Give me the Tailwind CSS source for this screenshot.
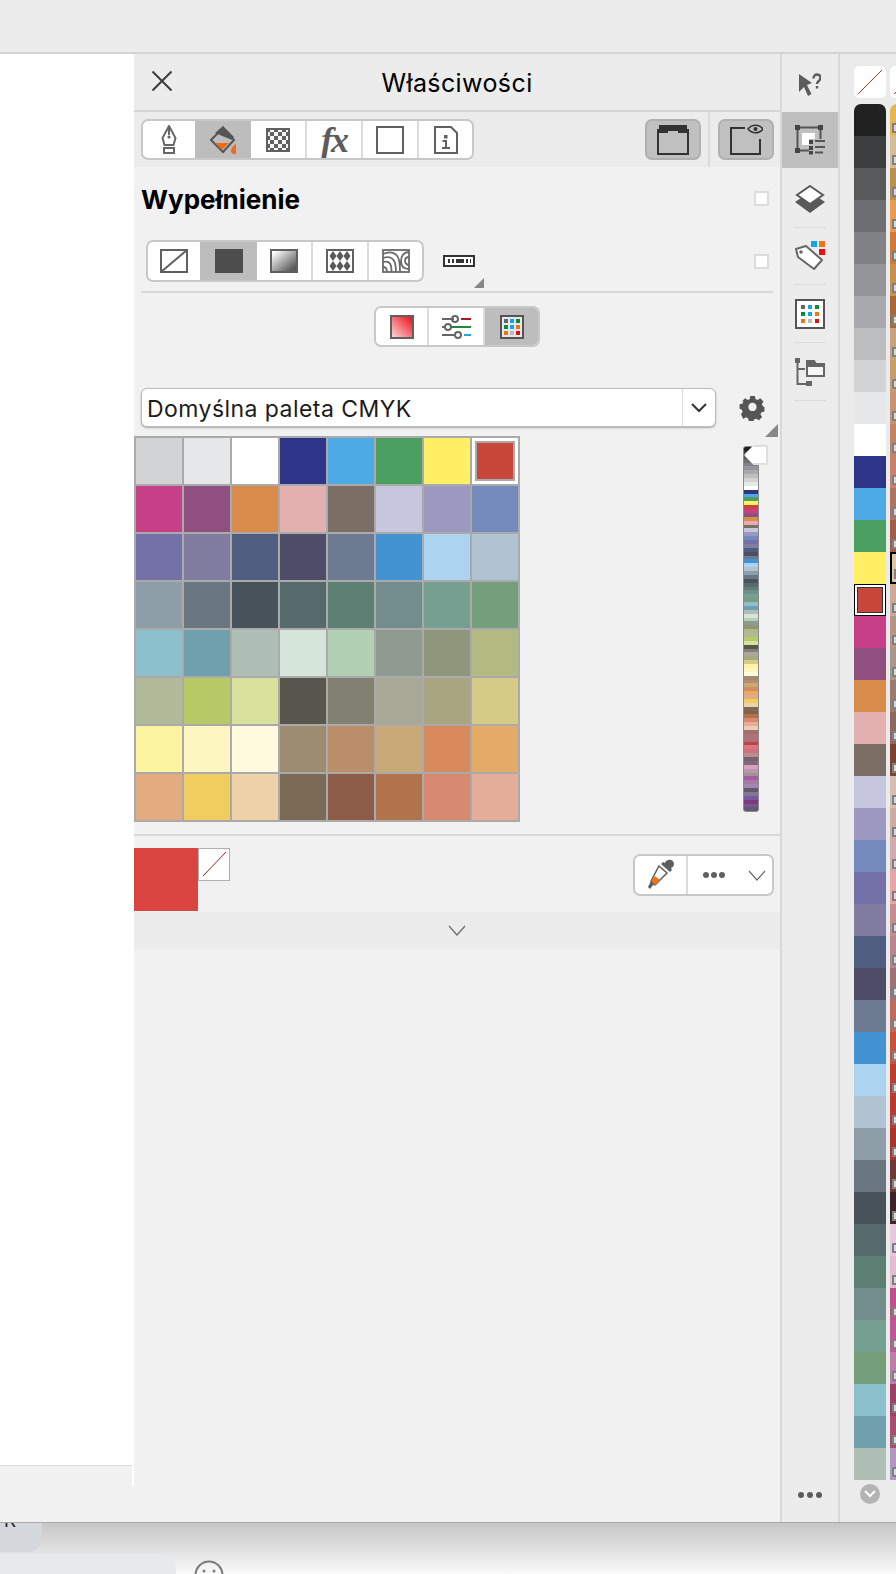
<!DOCTYPE html>
<html lang="pl">

<head>
  <meta charset="UTF-8" />
  <title>Właściwości</title>
  <script src="https://cdn.jsdelivr.net/npm/@tailwindcss/browser@4"></script>
</head>

<body class="w-[896px] h-[1574px] overflow-hidden bg-[#ececec] font-['Inter',sans-serif] text-black">

  <!-- top bar -->
  <div class="h-[54px] border-b-2 border-[#d4d4d4] bg-[#ececec]"></div>

  <div class="flex h-[1468px] border-b border-[#a8a8a8] box-content">

    <!-- document area -->
    <div class="w-[134px] flex flex-col bg-[#f1f1f1]">
      <div class="flex-1 bg-white"></div>
      <div class="h-[1px] w-[132px] bg-[#dcdcdc]"></div>
      <div class="h-[20px] flex">
        <div class="flex-1"></div>
        <div class="w-[2px] bg-white"></div>
      </div>
      <div class="h-[36px]"></div>
    </div>

    <!-- properties panel -->
    <div class="w-[648px] border-r-2 border-[#d8d8d8] bg-[#f1f1f1] flex flex-col">

      <div class="h-[56px] flex items-center relative bg-[#ececec]">
        <svg class="ml-[17px] mb-[3px]" width="22" height="22" viewBox="0 0 22 22" fill="none" stroke="#3c3c3c" stroke-width="2"><path d="M1.500 1.500l19 19M20.500 1.500l-19 19" /></svg>
        <div class="flex-1 text-center text-[25px] leading-none pr-[39px] mt-[3px] tracking-[0.4px]">Właściwości</div>
      </div>
      <div class="h-[2px] bg-[#d6d6d6]"></div>

      <!-- tabs -->
      <div class="h-[55px] flex items-center pl-[7px] bg-[#ececec]">
        <div class="flex h-[41px] w-[333px] border-2 border-[#c8c8c8] rounded-[7px] bg-white overflow-hidden">
          <div class="w-[52px] flex items-center justify-center">
            <svg width="20" height="30" viewBox="0 0 20 30" fill="none" stroke="#666" stroke-width="2"><path d="M10 1l6.500 12-2 7h-9l-2-7z" /><path d="M10 2v8" /><circle cx="10" cy="12" r="1.600" fill="#666" stroke="none" /><path d="M5 23h10v5H5z" /></svg>
          </div>
          <div class="w-[56px] flex items-center justify-center bg-[#bdbdbd]">
            <svg width="26" height="28" viewBox="0 0 26 28"><path d="M13 2L1 14l12 12 11-12z" fill="none" stroke="#555" stroke-width="2" /><path d="M5 7l8-7 11 11-2 3z" fill="#555" /><path d="M5 17h14l-7 7z" fill="#ef6c17" /><path d="M26 18c-3 1-5 5-5 7 0 1 1 3 3 3h2z" fill="#ef6c17" /></svg>
          </div>
          <div class="w-[56px] flex items-center justify-center border-r-2 border-[#dcdcdc]">
            <svg width="24" height="24" viewBox="0 0 24 24"><defs><pattern id="chk" width="8" height="8" patternUnits="userSpaceOnUse"><rect width="8" height="8" fill="#f4f4f4" /><rect width="4" height="4" fill="#606060" /><rect x="4" y="4" width="4" height="4" fill="#606060" /></pattern></defs><rect width="24" height="24" fill="url(#chk)" /><rect x="1" y="1" width="22" height="22" fill="none" stroke="#606060" stroke-width="2" /></svg>
          </div>
          <div class="w-[56px] flex items-center justify-center border-r-2 border-[#dcdcdc] font-['Liberation_Serif',serif] italic font-bold text-[36px] leading-none tracking-[-2px] text-[#5c5c5c]">fx</div>
          <div class="w-[56px] flex items-center justify-center border-r-2 border-[#dcdcdc]">
            <div class="w-[28px] h-[28px] border-2 border-[#606060]"></div>
          </div>
          <div class="flex-1 flex items-center justify-center">
            <svg width="24" height="28" viewBox="0 0 24 28" fill="none" stroke="#606060" stroke-width="2"><path d="M1 1h16l6 6v20H1z" /><rect x="10" y="9" width="3.500" height="3.500" fill="#606060" stroke="none" /><path d="M8.500 15h3.500v7M8 22h8" /></svg>
          </div>
        </div>
        <div class="ml-auto w-[56px] h-[41px] rounded-[7px] border-2 border-[#b0b0b0] bg-[#c0c0c0] flex items-center justify-center">
          <svg width="32" height="30" viewBox="0 0 32 30" fill="none"><path d="M1 5h30v24H1z" stroke="#333" stroke-width="2" /><path d="M2 0h28v8h-9V4H11v4H2z" fill="#333" /></svg>
        </div>
        <div class="w-[2px] h-[55px] ml-[7px] mr-[8px] bg-[#dcdcdc]"></div>
        <div class="w-[56px] h-[41px] mr-[6px] rounded-[7px] border-2 border-[#b0b0b0] bg-[#c0c0c0] flex items-center justify-center">
          <svg width="34" height="32" viewBox="0 0 34 32" fill="none" stroke="#333" stroke-width="2"><path d="M31 15v15H2V4h14" /><path d="M19 5c4-5 11-5 15 0-4 5-11 5-15 0z" stroke-width="1.500" /><circle cx="26.500" cy="5" r="2" fill="#333" stroke="none" /></svg>
        </div>
      </div>

      <!-- fill section -->
      <div class="h-[63px] flex items-center pl-[7px] pr-[11px]">
        <h2 class="text-[26px] font-bold leading-none mt-[2px]">Wypełnienie</h2>
        <div class="ml-auto w-[15px] h-[15px] bg-white border-2 border-[#dcdcdc]"></div>
      </div>

      <div class="h-[42px] mt-[10px] flex items-center pl-[12px] pr-[11px] relative">
        <div class="flex h-[42px] w-[278px] border-2 border-[#c8c8c8] rounded-[7px] bg-white overflow-hidden">
          <div class="w-[52px] flex items-center justify-center">
            <svg width="28" height="24" viewBox="0 0 28 24" fill="none" stroke="#606060" stroke-width="2"><rect x="1" y="1" width="26" height="22" /><path d="M1 23L27 1" /></svg>
          </div>
          <div class="w-[57px] flex items-center justify-center bg-[#bdbdbd]">
            <div class="w-[28px] h-[24px] bg-[#4d4d4d]"></div>
          </div>
          <div class="w-[56px] flex items-center justify-center border-r-2 border-[#dcdcdc]">
            <svg width="28" height="24" viewBox="0 0 28 24"><defs><linearGradient id="gr" x1="0" y1="0" x2="1" y2="1"><stop offset="0.1" stop-color="#fff" /><stop offset="0.85" stop-color="#5a5a5a" /></linearGradient></defs><rect x="1" y="1" width="26" height="22" fill="url(#gr)" stroke="#606060" stroke-width="2" /></svg>
          </div>
          <div class="w-[56px] flex items-center justify-center border-r-2 border-[#dcdcdc]">
            <svg width="28" height="24" viewBox="0 0 28 24" fill="#5a5a5a"><rect x="1" y="1" width="26" height="22" fill="none" stroke="#606060" stroke-width="2" /><path d="M7 2l3.500 5L7 12 3.500 7zM14 2l3.500 5L14 12l-3.500-5zM21 2l3.500 5L21 12l-3.500-5zM7 12l3.500 5L7 22l-3.500-5zM14 12l3.500 5L14 22l-3.500-5zM21 12l3.500 5L21 22l-3.500-5z" /></svg>
          </div>
          <div class="flex-1 flex items-center justify-center">
            <svg width="28" height="24" viewBox="0 0 28 24" fill="none" stroke="#6a6a6a" stroke-width="1.800"><rect x="1" y="1" width="26" height="22" /><path d="M1 5c7-3 14-2 16 6 1 4 1 8 1 12M1 9c6-2 10-1 12 5 .7 3 1 6 1 9M1 13c4-1 7 0 8 4 .4 2 .5 4 .5 6M1 18c2 0 4 1 4 5M27 3c-5 0-8 4-8 9s3 8 8 8M27 8c-3 0-4 2-4 4s2 4 4 4" /></svg>
          </div>
        </div>
        <svg class="ml-[19px] mt-[-1px]" width="32" height="12" viewBox="0 0 32 12"><rect x="1" y="1" width="30" height="10" fill="#fff" stroke="#333" stroke-width="2" /><path d="M5 4h2v4H5zM9 4h2v4H9zM13 4h8v4h-8zM23 4h2v4h-2zM27 4h1v4h-1z" fill="#333" /></svg>
        <div class="absolute left-[340px] top-[38px] w-[10px] h-[10px] bg-[#888] [clip-path:polygon(100%_0,100%_100%,0_100%)]"></div>
        <div class="ml-auto mt-[1px] w-[15px] h-[15px] bg-white border-2 border-[#dcdcdc]"></div>
      </div>

      <div class="h-[2px] mt-[9px] ml-[7px] mr-[7px] bg-[#d8d8d8]"></div>

      <!-- colour model buttons -->
      <div class="mt-[13px] flex justify-center">
        <div class="flex h-[41px] w-[166px] border-2 border-[#c8c8c8] rounded-[7px] bg-white overflow-hidden">
          <div class="w-[53px] flex items-center justify-center border-r-2 border-[#dcdcdc]">
            <svg width="24" height="24" viewBox="0 0 24 24"><defs><linearGradient id="rd" x1="1" y1="0" x2="0" y2="1"><stop offset="0.1" stop-color="#f01c24" /><stop offset="1" stop-color="#fbdfe0" /></linearGradient></defs><rect x="1" y="1" width="22" height="22" fill="url(#rd)" stroke="#606060" stroke-width="2" /></svg>
          </div>
          <div class="w-[56px] flex items-center justify-center border-r-2 border-[#dcdcdc]">
            <svg width="29" height="24" viewBox="0 0 29 24" fill="none" stroke-width="2"><path d="M0 4h12" stroke="#666" /><path d="M0 12h4M0 20h12" stroke="#666" /><circle cx="13" cy="4" r="3" stroke="#666" /><circle cx="6" cy="12" r="3" stroke="#666" /><circle cx="16" cy="20" r="3" stroke="#666" /><path d="M19 4h10" stroke="#a81c22" /><path d="M9 12h20" stroke="#1b8a3c" /><path d="M22 20h7" stroke="#28a3dc" /></svg>
          </div>
          <div class="flex-1 flex items-center justify-center bg-[#bdbdbd]">
            <svg width="24" height="24" viewBox="0 0 24 24"><rect x="1" y="1" width="22" height="22" fill="#e8e8e8" stroke="#555" stroke-width="2" /><path d="M4 4h4v4H4z" fill="#666" /><path d="M10 4h4v4h-4z" fill="#12a5e5" /><path d="M16 4h4v4h-4z" fill="#0b8a3b" /><path d="M4 10h4v4H4z" fill="#0b8a3b" /><path d="M10 10h4v4h-4z" fill="#12a5e5" /><path d="M16 10h4v4h-4z" fill="#ef7417" /><path d="M4 16h4v4H4z" fill="#ef7417" /><path d="M10 16h4v4h-4z" fill="#bbb" /><path d="M16 16h4v4h-4z" fill="#e01010" /></svg>
          </div>
        </div>
      </div>

      <!-- palette picker -->
      <div class="mt-[41px] h-[39px] flex items-center pl-[7px] relative">
        <div class="flex items-center h-[39px] w-[575px] bg-white border border-[#bdbdbd] rounded-[6px] shadow-[0_1px_2px_rgba(0,0,0,0.3)]">
          <div class="flex-1 pl-[5px] mt-[4px] text-[23px] leading-none tracking-[0.45px] text-[#1c1c1c]">Domyślna paleta CMYK</div>
          <div class="w-[33px] h-full border-l border-[#dcdcdc] flex items-center justify-center">
            <svg width="16" height="10" viewBox="0 0 16 10" fill="none" stroke="#333" stroke-width="2"><path d="M1 1l7 7 7-7" /></svg>
          </div>
        </div>
        <svg class="ml-[23px]" width="26" height="26" viewBox="0 0 26 26" fill="#555"><path fill-rule="evenodd" d="M10.500 1h5l.8 3.300 2.300 1 2.900-1.800 3.500 3.500-1.800 2.900 1 2.300 1.800.8v5l-3.300.8-1 2.300 1.800 2.900-3.500 3.500-2.900-1.800-2.300 1-.8 1.800h-5l-.8-3.300-2.300-1-2.900 1.800L.5 21l1.800-2.900-1-2.300L-1 15v-5l3.300-.8 1-2.300L1.500 7 5 3.500l2.900 1.800 2.300-1zM13 8.500a4.500 4.500 0 100 9 4.500 4.500 0 000-9z" transform="translate(1.500 0) scale(.92)" /></svg>
        <div class="absolute left-[631px] top-[36px] w-[13px] h-[13px] bg-[#888] [clip-path:polygon(100%_0,100%_100%,0_100%)]"></div>
      </div>

      <!-- swatches -->
      <div class="mt-[9px] flex">
        <div id="swatches" class="grid grid-cols-8 auto-rows-[46px] gap-[2px] w-[386px] h-[386px] p-[2px] bg-[#aaaaaa]"></div>
        <div class="ml-[223px] mt-[10px] relative">
          <div id="strip" class="w-[16px] h-[366px] rounded-[3px] overflow-hidden flex flex-col border border-[#8a8a8a] bg-[#666]"></div>
          <div class="absolute left-[1px] top-[-1px] w-[24px] h-[20px] bg-white border-2 border-[#dedede] rounded-[2px] [clip-path:polygon(0_50%,40%_0,100%_0,100%_100%,40%_100%)]"></div>
        </div>
      </div>

      <div class="h-[2px] mt-[12px] bg-[#d8d8d8]"></div>

      <!-- current colour -->
      <div class="mt-[12px] h-[63px] flex">
        <div class="w-[64px] h-[63px] bg-[#da4541]"></div>
        <svg width="32" height="33" viewBox="0 0 32 33" class="shrink-0"><rect x=".5" y=".5" width="31" height="32" fill="#fff" stroke="#b0b0b0" /><path d="M5 28L28 4" stroke="#9c2020" /></svg>
        <div class="ml-auto mr-[6px] mt-[6px] flex w-[141px] h-[42px] border-2 border-[#c8c8c8] rounded-[7px] bg-white overflow-hidden">
          <div class="w-[53px] border-r-2 border-[#dcdcdc] flex items-center justify-center">
            <svg width="28" height="32" viewBox="0 0 28 32"><path d="M21 1c3-1 6 1 6 4 0 2-1 3-3 4l1 2-2 2-9-8 2-2 2 1c0-1 1-2 3-3z" fill="#5e5e5e" /><path d="M12 7l8 7L8 26 4 22z" fill="#fff" stroke="#5e5e5e" stroke-width="1.500" /><path d="M8 17l5 4-5 5-4-4z" fill="#ef7417" /><path d="M4 22l3 3-4 5-2-2z" fill="#5e5e5e" /></svg>
          </div>
          <div class="flex-1 flex items-center pl-[15px]">
            <div class="flex gap-[2px]">
              <div class="w-[6px] h-[6px] rounded-full bg-[#606060]"></div>
              <div class="w-[6px] h-[6px] rounded-full bg-[#606060]"></div>
              <div class="w-[6px] h-[6px] rounded-full bg-[#606060]"></div>
            </div>
            <svg class="ml-auto mr-[6px]" width="18" height="11" viewBox="0 0 18 11" fill="none" stroke="#6a6a6a" stroke-width="1.200"><path d="M1 1l8 9 8-9" /></svg>
          </div>
        </div>
      </div>

      <div class="h-[37px] mt-[1px] bg-[#ececec] flex items-center justify-center">
        <svg width="18" height="11" viewBox="0 0 18 11" fill="none" stroke="#6a6a6a" stroke-width="1.200"><path d="M1 1l8 9 8-9" /></svg>
      </div>
    </div>

    <!-- icon rail -->
    <div class="w-[58px] border-r-2 border-[#d8d8d8] bg-[#ececec] flex flex-col items-center">
      <div class="h-[58px] w-full flex items-center justify-center pt-[2px]">
        <svg width="22" height="23" viewBox="0 0 22 23"><path d="M0 1l13 9-5 2 4.500 9-3.500 2-4-9-5 5z" fill="#5c5c5c" /><path d="M14.500 5.500c0-2.500 1.500-4 3.500-4s3.500 1.500 3.500 3.500c0 3-3.500 3-3.500 6M18 13v2.500" fill="none" stroke="#5c5c5c" stroke-width="2.400" /></svg>
      </div>
      <div class="h-[56px] w-full bg-[#bfbfbf] flex items-center justify-center">
        <svg width="30" height="30" viewBox="0 0 30 30"><path d="M5 2.500h18M2.500 5v18M5 25.500h9M25.500 5v9" fill="none" stroke="#555" stroke-width="2" /><path d="M7 8h13v6h-6v6H7z" fill="#fff" /><path d="M0 0h5v5H0zM23 0h5v5h-5zM0 23h5v5H0z" fill="#444" /><path d="M14 15h4v4h-4zM14 21h4v4h-4zM14 26h4v3.500h-4z" fill="#444" /><path d="M20 16h10M20 22h10M20 27.500h8" stroke="#555" stroke-width="2" /></svg>
      </div>
      <div class="h-[59px] w-full flex items-center justify-center pt-[2px]">
        <svg width="30" height="28" viewBox="0 0 30 28"><path d="M0 17l6-4 9 6 9-6 6 4-15 11z" fill="#595959" /><path d="M15 1L28 10 15 19 2 10z" fill="#fff" stroke="#595959" stroke-width="2" /></svg>
      </div>
      <div class="w-[32px] h-px bg-[#dcdcdc]"></div>
      <div class="h-[56px] w-full flex items-center justify-center">
        <svg width="32" height="32" viewBox="0 0 32 32"><path d="M3 9l10-3 16 14-8 9L5 17z" transform="translate(-1 0)" fill="#fff" stroke="#666" stroke-width="2" stroke-linejoin="round" /><circle cx="7" cy="12" r="1.800" fill="#666" /><path d="M17 1h6v6h-6z" fill="#12a5e5" /><path d="M25 1h6v6h-6z" fill="#ef7417" /><path d="M25 9h6v6h-6z" fill="#ee0f16" /></svg>
      </div>
      <div class="w-[32px] h-px bg-[#dcdcdc]"></div>
      <div class="h-[57px] w-full flex items-center justify-center pt-[1px]">
        <svg width="30" height="30" viewBox="0 0 30 30"><rect x="1" y="1" width="28" height="28" fill="#fff" stroke="#555" stroke-width="2" /><path d="M6 6h4v4H6z" fill="#666" /><path d="M13 6h4v4h-4z" fill="#12a5e5" /><path d="M20 6h4v4h-4z" fill="#0b8a3b" /><path d="M6 13h4v4H6z" fill="#0b8a3b" /><path d="M13 13h4v4h-4z" fill="#12a5e5" /><path d="M20 13h4v4h-4z" fill="#ef7417" /><path d="M6 20h4v4H6z" fill="#ef7417" /><path d="M13 20h4v4h-4z" fill="#bbb" /><path d="M20 20h4v4h-4z" fill="#e01010" /></svg>
      </div>
      <div class="w-[32px] h-px bg-[#dcdcdc]"></div>
      <div class="h-[57px] w-full flex items-center justify-center pt-[1px]">
        <svg width="30" height="29" viewBox="0 0 30 29" fill="none"><path d="M0 0h5v5H0zM11 23h6v5h-6z" fill="#666" /><path d="M2.500 5v21H11M2.500 11H10" stroke="#666" stroke-width="2" /><path d="M12 3h7l2 3h8v12H12z" stroke="#666" stroke-width="2" fill="#f6f6f6" /><path d="M11 2h8l2 3h9v4H11z" fill="#666" /></svg>
      </div>
      <div class="w-[32px] h-px bg-[#dcdcdc]"></div>
      <div class="mt-auto mb-[24px] flex gap-[3px]">
        <div class="w-[6px] h-[6px] rounded-full bg-[#5c5c5c]"></div>
        <div class="w-[6px] h-[6px] rounded-full bg-[#5c5c5c]"></div>
        <div class="w-[6px] h-[6px] rounded-full bg-[#5c5c5c]"></div>
      </div>
    </div>

    <!-- colour docker -->
    <div class="w-[56px] bg-[#ebebeb] pt-[12px] pl-[14px] overflow-hidden">
      <div class="flex gap-[4px]">
        <svg class="shrink-0 rounded-[5px] bg-white" width="32" height="32" viewBox="0 0 32 32"><path d="M4 28L28 4" stroke="#a83a3a" /></svg>
        <svg class="shrink-0 rounded-[5px] bg-white" width="32" height="32" viewBox="0 0 32 32"><path d="M4 28L28 4" stroke="#a83a3a" /></svg>
      </div>
      <div class="mt-[6px] flex gap-[4px]">
        <div id="col1" class="w-[32px] shrink-0 rounded-t-[7px] overflow-hidden"></div>
        <div id="col2" class="w-[32px] shrink-0 rounded-t-[7px] overflow-hidden"></div>
      </div>
      <div class="mt-[4px] ml-[6px] w-[20px] h-[20px] rounded-full bg-[#b4b4b4] flex items-center justify-center">
        <svg width="12" height="8" viewBox="0 0 12 8" fill="none" stroke="#fff" stroke-width="2"><path d="M1 1l5 5 5-5" /></svg>
      </div>
    </div>
  </div>

  <!-- window below -->
  <div class="relative h-[51px] overflow-hidden bg-gradient-to-b from-[#c6c6c6] to-[#fafafa]">
    <div class="w-[42px] h-[29px] rounded-br-[14px] bg-[#d4d7db] overflow-hidden">
      <div class="mt-[-11px] pl-[4px] text-[18px] leading-[18px] text-[#222]">K</div>
    </div>
    <div class="mt-[2px] w-[176px] h-[30px] rounded-tr-[16px] bg-[#e7eaed]"></div>
    <svg class="absolute left-[194px] top-[37px]" width="30" height="30" viewBox="0 0 30 30" fill="none" stroke="#7c7c7c" stroke-width="2"><circle cx="15" cy="15" r="13.500" /><circle cx="10" cy="11" r="1.500" fill="#7c7c7c" stroke="none" /><circle cx="20" cy="11" r="1.500" fill="#7c7c7c" stroke="none" /></svg>
  </div>

  <script>
    const grays = ['#222122', '#3d3e40', '#58595b', '#6d6e71', '#808285', '#939598', '#a7a9ac', '#bcbec0'];
    const grid = [
      '#d1d3d4', '#e6e7e8', '#ffffff', '#2e3488', '#4eaae4', '#4a9f61', '#fff066', '#c8463a',
      '#c63f87', '#8f5080', '#d98b4b', '#e3b0b0', '#7a6e65', '#c6c6de', '#9c98c0', '#7489bc',
      '#7471a8', '#817da0', '#4f5e80', '#4e4c66', '#6c7a92', '#4393d2', '#acd4f0', '#b0c3d2',
      '#8e9ea9', '#6a7780', '#48525a', '#566a6c', '#5c8073', '#728d8b', '#759f91', '#759f7a',
      '#8cc0cc', '#70a0ad', '#b0bfb5', '#d6e5d9', '#b2d0b4', '#8f9a90', '#8e977c', '#b2ba82',
      '#b0ba98', '#b6ca66', '#d8e29c', '#57574e', '#828071', '#a8a896', '#a8a580', '#d4cb86',
      '#fdf4a0', '#fef6c0', '#fffade', '#9e8c70', '#bb8e6a', '#c7aa78', '#d98a5c', '#e3aa68',
      '#e3ab80', '#f1cd60', '#f0d2a8', '#7a6a56', '#8c5c48', '#b0734c', '#d88a70', '#e3ad98'
    ];
    const tail = ['#f0ccb8', '#a07070', '#b07078', '#b07078', '#c04050', '#d87878', '#d07080', '#b89090', '#786070', '#806878', '#d8a0c0', '#b898b0', '#a89098', '#a060a0', '#a878a8', '#a088b0', '#605870', '#807890', '#7858a0', '#803880', '#705890', '#685878'];
    const second = [
      '#e5b552', '#d4bc98', '#b8924a', '#e89d50', '#cf7a3c', '#c98f4d', '#a9683a', '#c6a27d', '#c99c6b', '#c69472', '#c08465',
      '#c97f6a', '#ae7461', '#a15d4a', '#dcc4a8', '#cfa897', '#b59585', '#a8958c', '#9c7b6f', '#8f6860', '#7c4430', '#d5bfb3',
      '#cfaba5', '#d3aab0', '#e8a5a5', '#c48e8e', '#b78690', '#9d7378', '#c06a5c', '#c9503c', '#bf3d2e', '#b83a30', '#a8342c',
      '#6e3a38', '#3d2426', '#e8c8dc', '#e4bcd0', '#c05088', '#c05898', '#bc80a8', '#9c4068', '#a84c70', '#b098c0'
    ];

    document.getElementById('swatches').innerHTML = grid.map((c, i) => i === 7
      ? `<div class="border-[3px] border-white"><div class="h-full border-2 border-[#aaaaaa]" style="background:${c}"></div></div>`
      : `<div style="background:${c}"></div>`).join('');

    document.getElementById('strip').innerHTML = [...grays, ...grid, ...tail]
      .map(c => `<div class="flex-1" style="background:${c}"></div>`).join('');

    document.getElementById('col1').innerHTML = [...grays, ...grid.slice(0, 35)].map((c, i) => i === 15
      ? `<div class="h-[32px] border border-black bg-white p-[2px]"><div class="h-full border border-[#333]" style="background:${c}"></div></div>`
      : `<div class="h-[32px]" style="background:${c}"></div>`).join('');

    document.getElementById('col2').innerHTML = second.map((c, i) =>
      `<div class="h-[32px] relative ${i === 14 ? 'border-2 border-black' : ''}" style="background:${c}"><div class="absolute left-[2px] bottom-[3px] w-[10px] h-[10px] border-2 border-[#808080] bg-[#d8d8d8]"></div></div>`).join('');
  </script>

</body>

</html>
